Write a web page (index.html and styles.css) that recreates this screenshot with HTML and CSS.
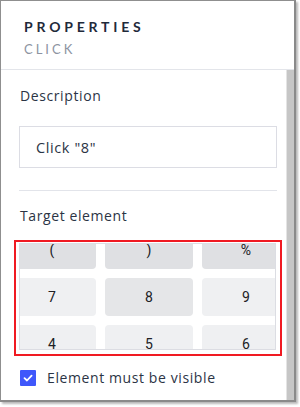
FILE: index.html
```html
<!DOCTYPE html>
<html>
<head>
<meta charset="utf-8">
<link rel="stylesheet" href="styles.css">
</head>
<body>
<div class="window">
  <header class="header">
    <div class="title">PROPERTIES</div>
    <div class="subtitle">CLICK</div>
  </header>
  <div class="body">
    <div class="content">
      <div class="label">Description</div>
      <div class="input">Click "8"</div>
      <div class="divider"></div>
      <div class="label label-target">Target element</div>
      <div class="target">
        <div class="shot">
          <div class="keys">
            <div class="key key-dark">(</div>
            <div class="key key-dark">)</div>
            <div class="key key-dark">%</div>
            <div class="key">7</div>
            <div class="key key-hover">8</div>
            <div class="key">9</div>
            <div class="key">4</div>
            <div class="key">5</div>
            <div class="key">6</div>
          </div>
        </div>
      </div>
      <label class="check">
        <span class="box">
          <svg width="10" height="8" viewBox="0 0 10 8"><path d="M1.5 4.2 L4 6.5 L8.6 1.6" fill="none" stroke="#fff" stroke-width="1.8" stroke-linecap="round" stroke-linejoin="round"/></svg>
        </span>
        <span class="check-text">Element must be visible</span>
      </label>
    </div>
    <div class="scrollbar"></div>
  </div>
</div>
</body>
</html>
```
FILE: styles.css
```css
html, body {
  margin: 0;
  padding: 0;
  background: #fff;
}
body {
  width: 300px;
  height: 407px;
  overflow: hidden;
  font-family: "Open Sans", "Liberation Sans", sans-serif;
}
.window {
  box-sizing: border-box;
  width: 296px;
  height: 402px;
  border: 1px solid #8f8f8f;
  border-right: 2px solid #8a8a8a;
  border-bottom: 2px solid #8a8a8a;
  box-shadow: 2px 2px 2px rgba(0,0,0,0.28);
  display: flex;
  flex-direction: column;
  background: #fff;
}
.header {
  height: 69px;
  border-bottom: 1px solid #e3e5ea;
  padding: 17px 0 0 23px;
  box-sizing: border-box;
  flex: none;
}
.title {
  font-family: "Lato", "Liberation Sans", sans-serif;
  font-size: 14px;
  font-weight: 700;
  letter-spacing: 3.8px;
  color: #1f2a3a;
  line-height: 18px;
}
.subtitle {
  font-family: "Lato", "Liberation Sans", sans-serif;
  font-size: 13px;
  font-weight: 400;
  letter-spacing: 3px;
  color: #8d93a1;
  line-height: 16px;
  margin-top: 5px;
}
.body {
  flex: 1;
  display: flex;
  min-height: 0;
}
.content {
  flex: 1;
  min-width: 0;
  padding: 16px 9px 0 18px;
  display: flex;
  flex-direction: column;
}
.scrollbar {
  width: 7px;
  flex: none;
  background: #c6c6c6;
  border-left: 1px solid #e4e4e4;
}
.label {
  font-size: 14px;
  line-height: 20px;
  color: #2b3445;
  letter-spacing: 0.6px;
  padding-left: 1px;
}
.input {
  margin-top: 20px;
  height: 42px;
  box-sizing: border-box;
  border: 1px solid #dcdde4;
  padding-left: 16px;
  font-size: 14.5px;
  letter-spacing: 0.6px;
  color: #2b3445;
  display: flex;
  align-items: center;
}
.divider {
  margin-top: 22px;
  height: 1px;
  background: #e2e4ea;
}
.label-target {
  margin-top: 15px;
}
.target {
  margin: 14px -5px 0 -5px;
  border: 2px solid #f01a22;
  padding: 1px 4px 4px 3px;
  min-width: 0;
}
.shot {
  height: 107px;
  box-sizing: border-box;
  border: 1px solid #dcdde3;
  overflow: hidden;
  background: #fff;
}
.keys {
  width: 282px;
  margin: -13px 0 0 -12px;
  display: grid;
  grid-template-columns: 88px 88px 88px;
  grid-auto-rows: 38px;
  gap: 9px;
}
.key {
  background: #eff0f2;
  border-radius: 4px;
  display: flex;
  align-items: center;
  justify-content: center;
  font-family: "Roboto", "Liberation Sans", sans-serif;
  font-size: 14px;
  color: #202124;
}
.key-dark {
  background: #dfe0e3;
}
.key-hover {
  background: #e5e6e8;
}
.check {
  margin-top: 12px;
  display: flex;
  align-items: center;
  gap: 11px;
  padding-left: 1px;
}
.box {
  width: 16px;
  height: 16px;
  background: #3f57fb;
  border-radius: 1px;
  display: flex;
  align-items: center;
  justify-content: center;
}
.check-text {
  font-size: 14px;
  letter-spacing: 0.6px;
  color: #2b3445;
}
```
